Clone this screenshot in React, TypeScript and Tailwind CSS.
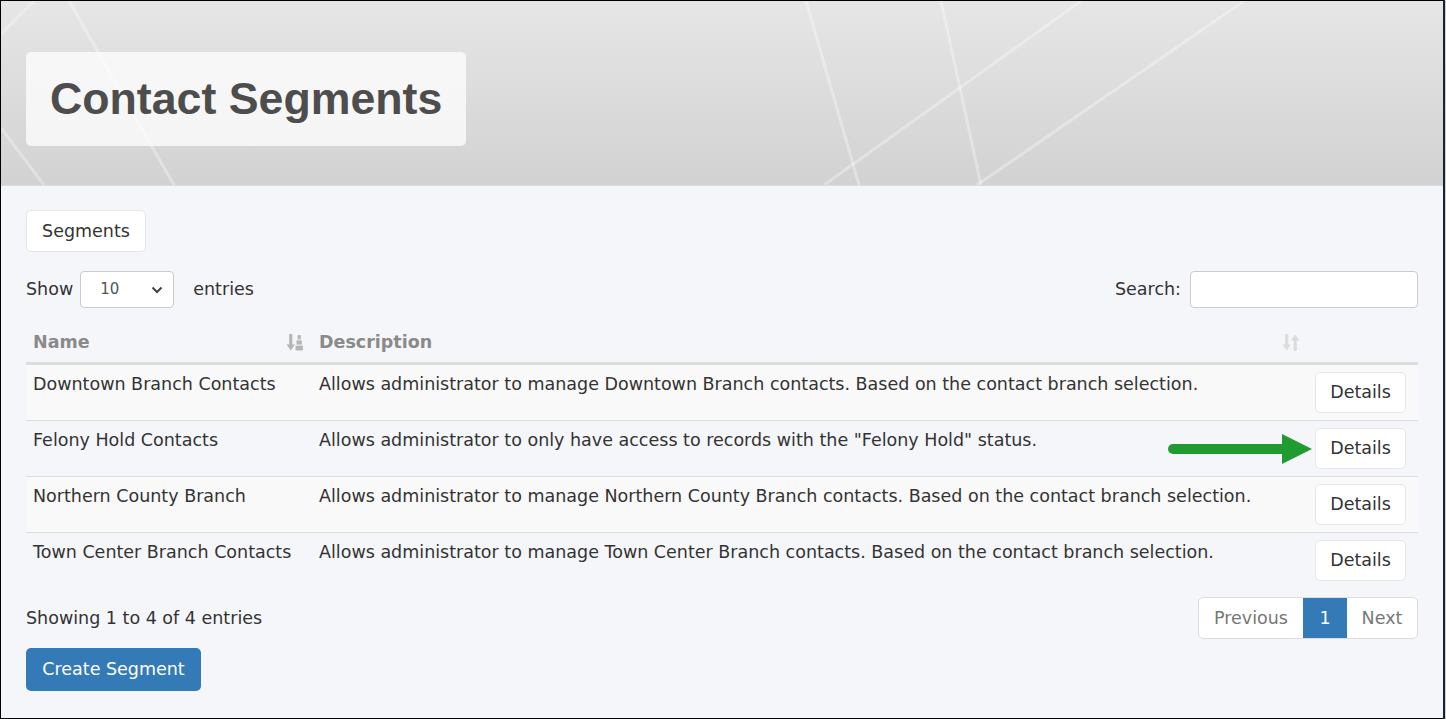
import React from "react";

const rows = [
  {
    name: "Downtown Branch Contacts",
    desc: "Allows administrator to manage Downtown Branch contacts. Based on the contact branch selection.",
  },
  {
    name: "Felony Hold Contacts",
    desc: 'Allows administrator to only have access to records with the "Felony Hold" status.',
  },
  {
    name: "Northern County Branch",
    desc: "Allows administrator to manage Northern County Branch contacts. Based on the contact branch selection.",
  },
  {
    name: "Town Center Branch Contacts",
    desc: "Allows administrator to manage Town Center Branch contacts. Based on the contact branch selection.",
  },
];

const SortAsc = () => (
  <svg width="19" height="19" viewBox="0 0 18 18" className="text-[#b5b5b5]">
    <path d="M3 1h3v10h2.5L4.5 16.5 0.5 11H3z" fill="currentColor" />
    <rect x="11" y="2" width="3" height="4" fill="currentColor" />
    <rect x="10" y="7" width="5" height="4" fill="currentColor" />
    <rect x="9" y="12" width="7" height="4.5" fill="currentColor" />
  </svg>
);

const SortBoth = () => (
  <svg width="19" height="19" viewBox="0 0 18 18" className="text-[#dcdcdc]">
    <path d="M3 1h3v10h2.5L4.5 16.5 0.5 11H3z" fill="currentColor" />
    <path d="M11 17h3V7h2.5L12.5 1.5 8.5 7H11z" fill="currentColor" />
  </svg>
);

const HeaderLines = () => (
  <svg className="absolute inset-0" width="1443" height="184" viewBox="0 0 1443 184">
    <g stroke="#ffffff" strokeOpacity="0.32" strokeWidth="3" fill="none">
      <line x1="0" y1="33" x2="33" y2="0" />
      <line x1="68" y1="0" x2="173" y2="184" />
      <line x1="0" y1="127" x2="43" y2="184" />
      <line x1="805" y1="0" x2="858" y2="184" />
      <line x1="940" y1="0" x2="980" y2="184" />
      <line x1="1080" y1="0" x2="823" y2="184" />
      <line x1="1243" y1="0" x2="976" y2="184" />
    </g>
  </svg>
);

export default function App() {
  return (
    <div
      className="w-[1446px] h-[719px] flex overflow-hidden bg-white text-[#333] text-[17.5px]"
      style={{ fontFamily: '"DejaVu Sans", Verdana, sans-serif' }}
    >
      <div className="relative flex-1 flex flex-col border-l border-t border-b border-black bg-[#f5f6fa]">
        <div className="relative h-[185px] shrink-0 border-b border-[#cfe0ea] bg-gradient-to-b from-[#e6e6e6] to-[#d2d2d2] pl-[25px] pt-[51px]">
          <HeaderLines />
          <div className="relative w-[440px] h-[94px] rounded-[5px] bg-white/75 flex items-center pl-[24px]">
            <h1
              className="text-[44.7px] font-bold text-[#4d4d4d] leading-none whitespace-nowrap"
              style={{ fontFamily: '"Liberation Sans", Arial, sans-serif' }}
            >
              Contact Segments
            </h1>
          </div>
        </div>

        <div className="flex flex-col px-[25px] pt-[24px]">
          <div>
            <button className="w-[120px] h-[42px] rounded-[5px] border border-[#e6e6e6] bg-white">
              Segments
            </button>
          </div>

          <div className="mt-[19px] flex items-center justify-between">
            <div className="flex items-center">
              <span>Show</span>
              <div className="ml-[7px] w-[94px] h-[37px] rounded-[4px] border border-[#ccc] bg-white flex items-center justify-between pl-[19px] pr-[10px]">
                <span className="text-[15px] text-[#555]">10</span>
                <svg width="12" height="8" viewBox="0 0 12 8">
                  <path d="M1.5 1.5l4.5 4.5 4.5-4.5" stroke="#444" strokeWidth="2" fill="none" />
                </svg>
              </div>
              <span className="ml-[19px]">entries</span>
            </div>
            <div className="flex items-center">
              <span>Search:</span>
              <div className="ml-[9px] w-[228px] h-[37px] rounded-[4px] border border-[#ccc] bg-white" />
            </div>
          </div>

          <table className="mt-[14px] w-[1392px] border-collapse table-fixed">
            <colgroup>
              <col className="w-[286px]" />
              <col className="w-[996px]" />
              <col className="w-[110px]" />
            </colgroup>
            <thead>
              <tr className="border-b-[3px] border-[#dddddd]">
                <th className="px-[7px] pt-[8px] pb-[7px] text-left font-bold text-[#8a8a8a] leading-[25px]">
                  <div className="flex items-center justify-between">
                    <span>Name</span>
                    <SortAsc />
                  </div>
                </th>
                <th className="px-[7px] pt-[8px] pb-[7px] text-left font-bold text-[#8a8a8a] leading-[25px]">
                  <div className="flex items-center justify-between">
                    <span>Description</span>
                    <SortBoth />
                  </div>
                </th>
                <th />
              </tr>
            </thead>
            <tbody>
              {rows.map((r, i) => (
                <tr
                  key={r.name}
                  className={`${i < rows.length - 1 ? "border-b border-[#dddddd]" : ""} ${
                    i % 2 === 0 ? "bg-[#f9f9f9]" : ""
                  }`}
                >
                  <td className="px-[7px] py-[7px] align-top leading-[25px] whitespace-nowrap">{r.name}</td>
                  <td className="px-[7px] py-[7px] align-top leading-[25px] whitespace-nowrap">{r.desc}</td>
                  <td className="px-[7px] py-[7px] align-top">
                    <button className="w-[91px] h-[41px] rounded-[5px] border border-[#e6e6e6] bg-white">
                      Details
                    </button>
                  </td>
                </tr>
              ))}
            </tbody>
          </table>

          <div className="mt-[9px] flex items-center justify-between">
            <span>Showing 1 to 4 of 4 entries</span>
            <div className="flex h-[42px] rounded-[5px] border border-[#dddddd] bg-white overflow-hidden">
              <span className="w-[104px] flex items-center justify-center text-[#777]">Previous</span>
              <span className="w-[44px] flex items-center justify-center bg-[#337ab7] text-white">1</span>
              <span className="w-[70px] flex items-center justify-center text-[#777]">Next</span>
            </div>
          </div>

          <div className="mt-[9px]">
            <button className="w-[175px] h-[43px] rounded-[5px] bg-[#337ab7] text-white">
              Create Segment
            </button>
          </div>
        </div>

        <svg className="absolute left-[1166px] top-[432px]" width="146" height="32" viewBox="0 0 146 32">
          <line x1="6" y1="16" x2="118" y2="16" stroke="#1f9b31" strokeWidth="10" strokeLinecap="round" />
          <polygon points="115,1 145,16 115,31" fill="#1f9b31" />
        </svg>
      </div>
      <div className="w-[3px] border-l-2 border-[#1b2233] bg-[#cfcfcf]" />
    </div>
  );
}
